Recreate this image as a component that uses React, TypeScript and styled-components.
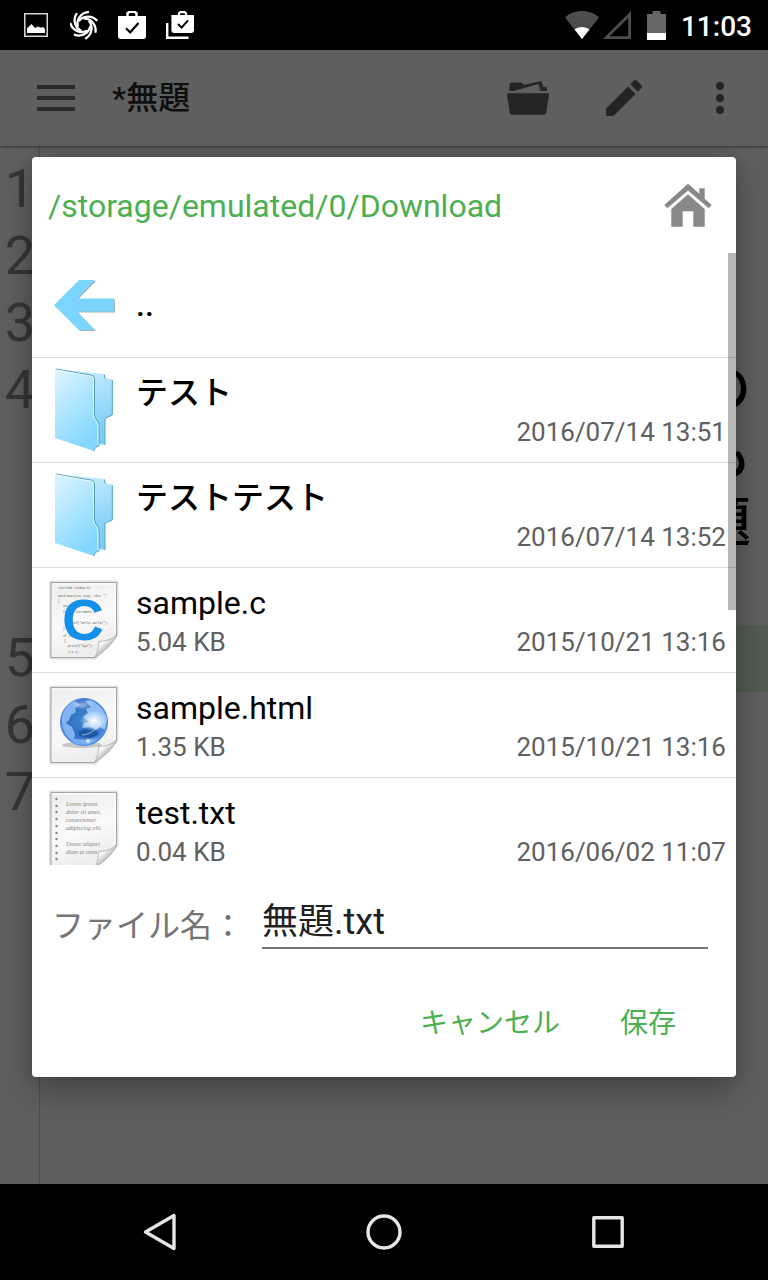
import React from "react";
import styled, { createGlobalStyle } from "styled-components";

const GlobalStyle = createGlobalStyle`
  *, *::before, *::after { box-sizing: border-box; }
  body {
    margin: 0;
    background: #000;
    font-family: Roboto, "Noto Sans CJK JP", sans-serif;
  }
`;

const Screen = styled.div`
  display: flex;
  flex-direction: column;
  min-height: 100vh;
`;

const StatusBar = styled.header`
  display: flex;
  align-items: center;
  justify-content: space-between;
  height: 50px;
  padding: 0 16px 0 12px;
  background: #000;
  color: #fff;
`;

const StatusGroup = styled.div`
  display: flex;
  align-items: center;
`;

const StatusSlot = styled.span<{ $width: number }>`
  display: flex;
  justify-content: center;
  width: ${(p) => p.$width}px;
`;

const Clock = styled.time`
  padding: 4px 0 0 2px;
  font-size: 28px;
  font-weight: 500;
  line-height: 48px;
`;

const AppArea = styled.main`
  position: relative;
  display: flex;
  flex: 1;
  flex-direction: column;
  background: #eee;
`;

const Toolbar = styled.div`
  position: relative;
  display: flex;
  align-items: center;
  height: 96px;
  padding-left: 16px;
  color: #5a5a5a;
  box-shadow: 0 1px 3px rgba(0, 0, 0, 0.5);
`;

const ToolbarButton = styled.button<{ $width: number }>`
  display: flex;
  align-items: center;
  justify-content: center;
  width: ${(p) => p.$width}px;
  height: 96px;
  padding: 0;
  border: 0;
  background: none;
  color: inherit;
`;

const Title = styled.h1`
  flex: 1;
  margin: 0 0 0 16px;
  color: #262626;
  font-size: 32px;
  font-weight: 500;
  line-height: 48px;
`;

const Editor = styled.div`
  display: flex;
  flex: 1;
`;

const Gutter = styled.ol`
  width: 40px;
  margin: 0;
  padding: 9px 4px 0 0;
  border-right: 1px solid #c4c4c4;
  list-style: none;
  color: #868686;
  font-size: 54px;
  line-height: 67px;
  text-align: right;
`;

const GutterLine = styled.li<{ $lines: number }>`
  height: ${(p) => p.$lines * 67}px;
`;

const Document = styled.div`
  flex: 1;
  padding-top: 10px;
  color: #000;
  font-size: 54px;
  font-weight: 500;
  line-height: 65px;
`;

const DocLine = styled.p<{ $active?: boolean }>`
  height: 67px;
  margin: 0;
  padding-right: 17px;
  overflow: hidden;
  background: ${(p) => (p.$active ? "#cde5cd" : "none")};
  text-align: right;
`;

const Scrim = styled.div`
  position: absolute;
  inset: 0;
  display: flex;
  padding: 107px 32px;
  background: rgba(0, 0, 0, 0.6);
`;

const Dialog = styled.section`
  display: flex;
  flex: 1;
  flex-direction: column;
  min-width: 0;
  border-radius: 4px;
  background: #fff;
  box-shadow: 0 14px 36px rgba(0, 0, 0, 0.3), 0 0 12px rgba(0, 0, 0, 0.1);
`;

const DialogHeader = styled.div`
  display: flex;
  align-items: center;
  justify-content: space-between;
  height: 96px;
  padding: 2px 24px 0 16px;
`;

const Path = styled.h2`
  margin: 0;
  color: #4caf50;
  font-size: 32px;
  font-weight: 400;
  line-height: 48px;
`;

const HomeButton = styled.button`
  display: flex;
  padding: 0;
  border: 0;
  background: none;
  color: #888;
`;

const ListFrame = styled.div`
  position: relative;
  flex: 1 1 0;
  min-height: 0;
  overflow: hidden;
`;

const FileList = styled.ul`
  margin: 0;
  padding: 0;
  list-style: none;
`;

const FileRow = styled.li`
  display: flex;
  align-items: center;
  gap: 16px;
  height: 105px;
  padding: 0 10px 0 16px;
  border-bottom: 1px solid #dcdcdc;
`;

const FileBody = styled.div`
  flex: 1;
`;

const FileName = styled.div<{ $folder: boolean }>`
  color: #000;
  font-size: 32px;
  font-weight: ${(p) => (p.$folder ? 500 : 400)};
  line-height: 44px;
`;

const FileMeta = styled.div`
  display: flex;
  justify-content: space-between;
  color: #606060;
  font-size: 26px;
  line-height: 34px;
`;

const ScrollThumb = styled.div`
  position: absolute;
  top: 0;
  right: 0;
  width: 8px;
  height: 357px;
  background: rgba(0, 0, 0, 0.28);
`;

const NameForm = styled.div`
  display: flex;
  align-items: flex-end;
  gap: 16px;
  padding: 29px 28px 0 20px;
`;

const NameLabel = styled.label`
  width: 194px;
  color: #757575;
  font-size: 32px;
  line-height: 46px;
  white-space: nowrap;
`;

const NameInput = styled.input`
  flex: 1;
  min-width: 0;
  height: 55px;
  padding: 0 0 6px;
  border: 0;
  border-bottom: 2px solid #757575;
  border-radius: 0;
  outline: none;
  background: none;
  color: #212121;
  font: inherit;
  font-size: 36px;
`;

const Actions = styled.div`
  display: flex;
  justify-content: flex-end;
  gap: 28px;
  padding: 36px 44px 20px;
`;

const ActionButton = styled.button`
  height: 72px;
  padding: 0 16px;
  border: 0;
  background: none;
  color: #4caf50;
  font: inherit;
  font-size: 28px;
`;

const NavBar = styled.nav`
  display: grid;
  grid-template-columns: repeat(3, 1fr);
  height: 96px;
  padding: 0 48px;
  background: #000;
`;

const NavButton = styled.button`
  display: flex;
  align-items: center;
  justify-content: center;
  padding: 0;
  border: 0;
  background: none;
`;

const PictureIcon = () => (
  <svg width="24" height="24" viewBox="0 0 24 24">
    <rect x="0.75" y="0.75" width="22.5" height="22.5" fill="none" stroke="#d6d6d0" strokeWidth="1.5" />
    <path d="M3 20V15.5L7.5 11l3.5 4 3-1.6 2.8 1.4L19 14l2 2v4z" fill="#fff" />
  </svg>
);

const SwirlIcon = () => (
  <svg width="28" height="30" viewBox="-14 -15 28 30" fill="none" stroke="#fff" strokeWidth="2.3" strokeLinecap="round">
    {[0, 1, 2, 3, 4, 5, 6].map((n) => (
      <path key={n} transform={`rotate(${(n * 360) / 7})`} d="M-6.3 0.8C-7.6 -5 -3.5 -12 4 -12.8" />
    ))}
  </svg>
);

const BagIcon = () => (
  <svg width="28" height="28" viewBox="0 0 28 28">
    <path d="M9.5 6V2.2L11.5 0.8H16.5L18.5 2.2V6" fill="none" stroke="#fff" strokeWidth="2.4" />
    <path d="M0 5H28V25a3 3 0 0 1-3 3H3a3 3 0 0 1-3-3z" fill="#fff" />
    <path d="M8 17.2l4.2 4.1L20.5 12" fill="none" stroke="#000" strokeWidth="2.2" />
  </svg>
);

const BagStackIcon = () => (
  <svg width="28" height="28" viewBox="0 0 28 28">
    <path d="M1.2 12V26.8H22.5" fill="none" stroke="#fff" strokeWidth="2.4" />
    <path d="M13 5V2.2L14.5 1.1H18.5L20 2.2V5" fill="none" stroke="#fff" strokeWidth="2.2" />
    <path d="M5.4 4H28V19.6a2.4 2.4 0 0 1-2.4 2.4H7.8a2.4 2.4 0 0 1-2.4-2.4z" fill="#fff" />
    <path d="M12 13l3.6 3.6L22 9.4" fill="none" stroke="#000" strokeWidth="2" />
  </svg>
);

const WifiIcon = () => (
  <svg width="34" height="28" viewBox="0 0 34 28">
    <path d="M17 28L0 6.4C9-2.1 25-2.1 34 6.4z" fill="#4d4d4d" />
    <path d="M17 28L9.6 18.6C13.5 15 20.5 15 24.4 18.6z" fill="#fff" />
  </svg>
);

const SignalIcon = () => (
  <svg width="28" height="28" viewBox="0 0 28 28">
    <path d="M3.4 26.6L26.6 3.4V26.6z" fill="none" stroke="#4d4d4d" strokeWidth="2.8" />
  </svg>
);

const BatteryIcon = () => (
  <svg width="19" height="29" viewBox="0 0 19 29">
    <path d="M5.5 0H13.5V3H19V22H0V3H5.5z" fill="#666" />
    <path d="M0 22H19V29H0z" fill="#fff" />
  </svg>
);

const MenuIcon = () => (
  <svg width="38" height="26" viewBox="0 0 38 26" fill="#6c6c6c">
    <path d="M0 0H38V4H0zM0 11H38V15H0zM0 22H38V26H0z" />
  </svg>
);

const OpenFolderIcon = () => (
  <svg width="42" height="34" viewBox="0 0 42 34" fill="currentColor">
    <path d="M0.8 12.2H41.2a.9.9 0 0 1 .9 1.1L39.2 31.8a2.4 2.4 0 0 1-2.4 2H5.2a2.4 2.4 0 0 1-2.4-2L-.1 13.3a.9.9 0 0 1 .9-1.1z" />
    <path d="M2.4 10V4.2a2.6 2.6 0 0 1 2.6-2.6h8.6c1.6 0 2.4 2.2 4 2.2L33 .2c1-.2 1.7.2 2 1.2l1.3 4.4h1.2a2.4 2.4 0 0 1 2.4 2.4V10h-5.8a1 1 0 0 1-1-.8L31.6 2.9 8.2 9.6 6.8 10z" />
  </svg>
);

const PencilIcon = () => (
  <svg width="48" height="48" viewBox="0 0 24 24" fill="currentColor">
    <path d="M3 17.25V21h3.75L17.81 9.94l-3.75-3.75L3 17.25zM20.71 7.04a1 1 0 0 0 0-1.41l-2.34-2.34a1 1 0 0 0-1.41 0l-1.83 1.83 3.75 3.75 1.83-1.83z" />
  </svg>
);

const MoreIcon = () => (
  <svg width="8" height="32" viewBox="0 0 8 32" fill="currentColor">
    <circle cx="4" cy="4" r="4" />
    <circle cx="4" cy="16" r="4" />
    <circle cx="4" cy="28" r="4" />
  </svg>
);

const HomeIcon = () => (
  <svg width="48" height="48" viewBox="0 0 48 48" fill="currentColor">
    <path d="M24 1.7L35.3 11.8V6.3h5.4v10.4l7 6.3-3 3.3L24 8.5 3.3 26.3.3 23z" />
    <path d="M24 12.3L40.7 27v17.7H29.3V29.3H18.7v15.4H7.3V27z" />
  </svg>
);

const BackArrowIcon = () => (
  <svg width="72" height="88" viewBox="0 0 72 88">
    <path d="M7 45L32 20H48L30 38.5H67V51.5H30L48 70H32z" fill="#9fb4be" />
    <path d="M6 44L31 19H47L29 37.5H66V50.5H29L47 69H31z" fill="#7bd5ff" />
  </svg>
);

const FolderIcon = () => (
  <svg width="72" height="88" viewBox="0 0 72 88">
    <defs>
      <linearGradient id="folderFront" x1="0" y1="0" x2="0.5" y2="1">
        <stop offset="0" stopColor="#dff5ff" />
        <stop offset="1" stopColor="#83d7ff" />
      </linearGradient>
      <linearGradient id="folderBack" x1="0" y1="0" x2="0.3" y2="1">
        <stop offset="0" stopColor="#d5f1fd" />
        <stop offset="1" stopColor="#79cdf7" />
      </linearGradient>
    </defs>
    <path d="M7 3L56 8C57 8 56.5 12 58 12.3L64 13.5C65 14 65 15 65 16V48C65 51 58 50 57 54V79L51 78 40 70z" fill="url(#folderBack)" />
    <path d="M56.5 8.5V11.5L58 12.3M64.3 14V48C64 51 57 50 57 54V79" fill="none" stroke="#5fa5be" strokeWidth="1" />
    <path d="M7 3L44 9.3Q46.5 10 46.5 13V49C46.5 54 51 54 51 59V80C49 80 46 82 46 85L7 72z" fill="url(#folderFront)" />
    <path d="M8 3L44 9.3Q46.5 10 46.5 13V49C46.5 54 51 54 51 59V80C49 80 46 82 46 85" fill="none" stroke="#4a98ae" strokeWidth="0.9" />
    <path d="M8.5 4L43.5 10.3Q45.5 11 45.5 14V49.5C45.5 54 50 55 50 60V79" fill="none" stroke="#effbff" strokeWidth="0.9" />
  </svg>
);

const Sheet = ({ id, children }: { id: string; children: React.ReactNode }) => (
  <svg width="72" height="88" viewBox="0 0 72 88" aria-hidden="true">
    <defs>
      <linearGradient id={`${id}Page`} x1="0" y1="0" x2="0.3" y2="1">
        <stop offset="0" stopColor="#ececec" />
        <stop offset="0.6" stopColor="#fafafa" />
        <stop offset="1" stopColor="#ededed" />
      </linearGradient>
      <linearGradient id={`${id}Curl`} x1="0.15" y1="0.1" x2="0.75" y2="0.75">
        <stop offset="0" stopColor="#c4c4c4" />
        <stop offset="0.35" stopColor="#ffffff" />
        <stop offset="1" stopColor="#8f8f8f" />
      </linearGradient>
    </defs>
    <path d="M3 6.5H68.5V59L47 81.5H3z" fill="none" stroke="#bdbdbd" strokeOpacity="0.45" strokeWidth="4" strokeLinejoin="round" />
    <path d="M3 6.5H68.5V59L47 81.5H3z" fill={`url(#${id}Page)`} stroke="#a6a6a6" strokeWidth="1" />
    <path d="M4.5 8H67V58" fill="none" stroke="#fff" strokeWidth="1" />
    {children}
    <path d="M46 81.5C50 77 50 71 51 65.5C56 65 64 64 68.5 59C66 67 56 76 46 81.5z" fill={`url(#${id}Curl)`} stroke="#a2a2a2" strokeWidth="0.7" />
  </svg>
);

const codeLines: [number, number, string][] = [
  [10, 13, "#include <stdio.h>"],
  [10, 21, "void main(int argc, char **"],
  [10, 26, "{"],
  [15, 31, "int i;"],
  [15, 37, "for(i; increment;)"],
  [19, 48, "printf(\"Hello World!\");"],
  [15, 54, "}"],
  [15, 61, "if (i)"],
  [16, 66, "{"],
  [20, 71, "printf(\"bye\");"],
  [20, 77, "i = 1;"],
];

const CFileIcon = () => (
  <Sheet id="c">
    <g fill="#555" fontFamily="Liberation Mono, monospace" fontSize="3">
      {codeLines.map(([x, y, t]) => (
        <text key={y} x={x} y={y}>{t}</text>
      ))}
    </g>
    <text x="14" y="64" fill="#1590ea" fontFamily="Liberation Sans, sans-serif" fontSize="58" fontWeight="700">C</text>
  </Sheet>
);

const HtmlFileIcon = () => (
  <Sheet id="html">
    <defs>
      <radialGradient id="globe" cx="0.5" cy="0.45" r="0.55">
        <stop offset="0" stopColor="#3f85cc" />
        <stop offset="0.65" stopColor="#2f6fc4" />
        <stop offset="1" stopColor="#5a96e8" />
      </radialGradient>
      <radialGradient id="glint">
        <stop offset="0" stopColor="#fff" />
        <stop offset="1" stopColor="#fff" stopOpacity="0" />
      </radialGradient>
    </defs>
    <ellipse cx="34" cy="64" rx="20" ry="3" fill="#c6c6c6" />
    <circle cx="36" cy="41" r="23.5" fill="url(#globe)" stroke="#4f8be0" strokeWidth="1" />
    <path d="M14 37C15 29 20 22 27 20L32 24 27 27 28 31 23 34 21 39 18 42 24 46 27 53 25 60C18 56 13 46 14 37z" fill="#82b4f3" />
    <path d="M37 20L42 19C50 22 57 29 59 38L57 49 52 46 48 49 42 46 34 47 36 42 41 41 35 36 40 32 38 28 43 26z" fill="#8dbdf6" />
    <path d="M24 57C33 60 42 58 50 57C44 65 31 66 24 60z" fill="#78aff2" />
    <path d="M31 50L40 47 49 49 50 54 42 57 31 55z" fill="#1d58a6" />
    <ellipse cx="46" cy="40" rx="14" ry="11" fill="url(#glint)" />
    <ellipse cx="34" cy="24" rx="11" ry="5" fill="url(#glint)" opacity="0.5" />
    <path d="M34 54C42 54 50 47 53 41" fill="none" stroke="#e4f1ff" strokeWidth="0.6" />
    <circle cx="40" cy="60" r="3" fill="url(#glint)" />
  </Sheet>
);

const proseLines: [number, string][] = [
  [20, "Lorem ipsum"],
  [28, "dolor sit amet,"],
  [36, "consectetuer"],
  [44, "adipiscing elit."],
  [60, "Donec aliquet"],
  [68, "diam at enim"],
];

const TextFileIcon = () => (
  <Sheet id="txt">
    <g fill="#858585">
      {[13, 20, 26, 33, 40, 47, 53, 60, 67, 73, 80].map((y) => (
        <circle key={y} cx="8.5" cy={y} r="1.2" />
      ))}
    </g>
    <g fill="#858585" fontFamily="Liberation Serif, serif" fontStyle="italic" fontSize="6">
      {proseLines.map(([y, t]) => (
        <text key={y} x="18" y={y}>{t}</text>
      ))}
    </g>
  </Sheet>
);

type Entry = { icon: React.ReactNode; name: string; folder?: boolean; size?: string; date?: string };

const entries: Entry[] = [
  { icon: <BackArrowIcon />, name: "..", folder: true },
  { icon: <FolderIcon />, name: "テスト", folder: true, date: "2016/07/14 13:51" },
  { icon: <FolderIcon />, name: "テストテスト", folder: true, date: "2016/07/14 13:52" },
  { icon: <CFileIcon />, name: "sample.c", size: "5.04 KB", date: "2015/10/21 13:16" },
  { icon: <HtmlFileIcon />, name: "sample.html", size: "1.35 KB", date: "2015/10/21 13:16" },
  { icon: <TextFileIcon />, name: "test.txt", size: "0.04 KB", date: "2016/06/02 11:07" },
];

const gutterLines = [1, 1, 1, 4, 1, 1, 1];
const docLines = ["", "", "", "の", "も", "題", ""];

export default function App() {
  return (
    <Screen>
      <GlobalStyle />
      <StatusBar>
        <StatusGroup>
          <StatusSlot $width={48}><PictureIcon /></StatusSlot>
          <StatusSlot $width={48}><SwirlIcon /></StatusSlot>
          <StatusSlot $width={48}><BagIcon /></StatusSlot>
          <StatusSlot $width={48}><BagStackIcon /></StatusSlot>
        </StatusGroup>
        <StatusGroup>
          <StatusSlot $width={34}><WifiIcon /></StatusSlot>
          <StatusSlot $width={36}><SignalIcon /></StatusSlot>
          <StatusSlot $width={44}><BatteryIcon /></StatusSlot>
          <Clock>11:03</Clock>
        </StatusGroup>
      </StatusBar>
      <AppArea>
        <Toolbar>
          <ToolbarButton $width={80} aria-label="メニュー"><MenuIcon /></ToolbarButton>
          <Title>*無題</Title>
          <ToolbarButton $width={96} aria-label="開く"><OpenFolderIcon /></ToolbarButton>
          <ToolbarButton $width={96} aria-label="編集"><PencilIcon /></ToolbarButton>
          <ToolbarButton $width={96} aria-label="その他"><MoreIcon /></ToolbarButton>
        </Toolbar>
        <Editor>
          <Gutter>
            {gutterLines.map((lines, i) => (
              <GutterLine key={i} $lines={lines}>{i + 1}</GutterLine>
            ))}
          </Gutter>
          <Document>
            {docLines.map((text, i) => (
              <DocLine key={i}>{text}</DocLine>
            ))}
            <DocLine $active />
          </Document>
        </Editor>
        <Scrim>
          <Dialog role="dialog" aria-labelledby="dialog-path">
            <DialogHeader>
              <Path id="dialog-path">/storage/emulated/0/Download</Path>
              <HomeButton aria-label="ホーム"><HomeIcon /></HomeButton>
            </DialogHeader>
            <ListFrame>
              <FileList>
                {entries.map((entry) => (
                  <FileRow key={entry.name}>
                    {entry.icon}
                    <FileBody>
                      <FileName $folder={!!entry.folder}>{entry.name}</FileName>
                      {entry.date && (
                        <FileMeta>
                          <span>{entry.size}</span>
                          <span>{entry.date}</span>
                        </FileMeta>
                      )}
                    </FileBody>
                  </FileRow>
                ))}
              </FileList>
              <ScrollThumb />
            </ListFrame>
            <NameForm>
              <NameLabel htmlFor="file-name">ファイル名：</NameLabel>
              <NameInput id="file-name" type="text" defaultValue="無題.txt" />
            </NameForm>
            <Actions>
              <ActionButton>キャンセル</ActionButton>
              <ActionButton>保存</ActionButton>
            </Actions>
          </Dialog>
        </Scrim>
      </AppArea>
      <NavBar>
        <NavButton aria-label="戻る">
          <svg width="36" height="40" viewBox="0 0 36 40" fill="none" stroke="#e6e6e6" strokeWidth="3.4" strokeLinejoin="round">
            <path d="M3.5 20L32 3.5V36.5z" />
          </svg>
        </NavButton>
        <NavButton aria-label="ホーム画面">
          <svg width="36" height="36" viewBox="0 0 36 36" fill="none" stroke="#e6e6e6" strokeWidth="3.4">
            <circle cx="18" cy="18" r="16" />
          </svg>
        </NavButton>
        <NavButton aria-label="最近使ったアプリ">
          <svg width="32" height="32" viewBox="0 0 32 32" fill="none" stroke="#e6e6e6" strokeWidth="3.4" strokeLinejoin="round">
            <path d="M1.8 1.8H30.2V30.2H1.8z" />
          </svg>
        </NavButton>
      </NavBar>
    </Screen>
  );
}
